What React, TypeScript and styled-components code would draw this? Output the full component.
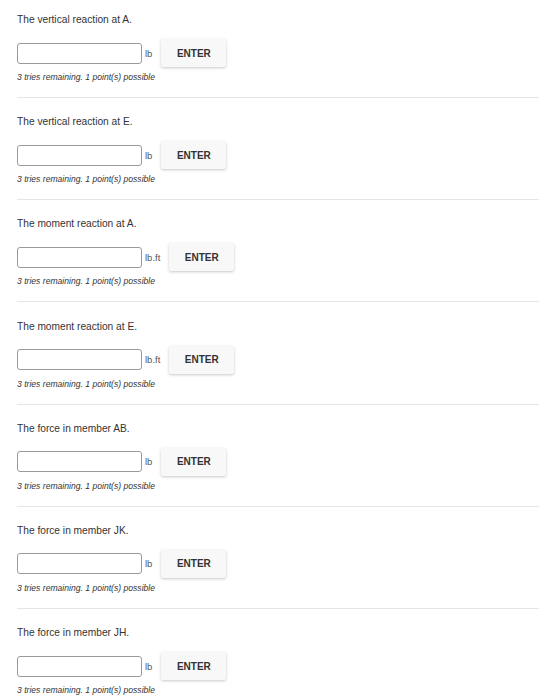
import React from 'react'
import styled, { createGlobalStyle } from 'styled-components'

const GlobalStyle = createGlobalStyle`
  body {
    margin: 0;
    background: #ffffff;
    font-family: "Liberation Sans", Arial, sans-serif;
    color: #333333;
  }
`

const Page = styled.div`
  display: flex;
  flex-direction: column;
  padding: 14px 20px 0 17px;
`

const Question = styled.div`
  display: flex;
  flex-direction: column;
`

const Prompt = styled.div`
  font-size: 10.2px;
  line-height: 12px;
  height: 12px;
  color: #333333;
`

const AnswerRow = styled.div`
  display: flex;
  flex-direction: row;
  align-items: center;
  height: 28px;
  margin-top: 13px;
`

const AnswerInput = styled.input`
  box-sizing: border-box;
  width: 125px;
  height: 21px;
  border: 1px solid #9a9a9a;
  border-radius: 3px;
  background: #ffffff;
  padding: 0 4px;
  outline: none;
`

const Unit = styled.span`
  margin-left: 3px;
  font-size: 9.5px;
  color: #555555;
`

const EnterButton = styled.button`
  box-sizing: border-box;
  margin-left: 9px;
  width: 65px;
  height: 28px;
  border: none;
  border-radius: 2px;
  background: #f8f8f8;
  box-shadow: 0 1px 3px rgba(0, 0, 0, 0.22);
  font-family: "Liberation Sans", Arial, sans-serif;
  font-size: 10px;
  font-weight: bold;
  color: #333333;
  cursor: pointer;
`

const Tries = styled.div`
  margin-top: 5px;
  font-size: 8.6px;
  line-height: 10px;
  height: 10px;
  font-style: italic;
  color: #333333;
`

const Divider = styled.hr`
  margin: 15px 0 18.2px 0;
  border: none;
  height: 1px;
  background: #e6e6e6;
`

const questions = [
  { prompt: 'The vertical reaction at A.', unit: 'lb' },
  { prompt: 'The vertical reaction at E.', unit: 'lb' },
  { prompt: 'The moment reaction at A.', unit: 'lb.ft' },
  { prompt: 'The moment reaction at E.', unit: 'lb.ft' },
  { prompt: 'The force in member AB.', unit: 'lb' },
  { prompt: 'The force in member JK.', unit: 'lb' },
  { prompt: 'The force in member JH.', unit: 'lb' },
]

const App = () => (
  <>
    <GlobalStyle />
    <Page>
      {questions.map((q, i) => (
        <Question key={q.prompt}>
          <Prompt>{q.prompt}</Prompt>
          <AnswerRow>
            <AnswerInput type="text" />
            <Unit>{q.unit}</Unit>
            <EnterButton>ENTER</EnterButton>
          </AnswerRow>
          <Tries>3 tries remaining. 1 point(s) possible</Tries>
          {i < questions.length - 1 && <Divider />}
        </Question>
      ))}
    </Page>
  </>
)

export default App
